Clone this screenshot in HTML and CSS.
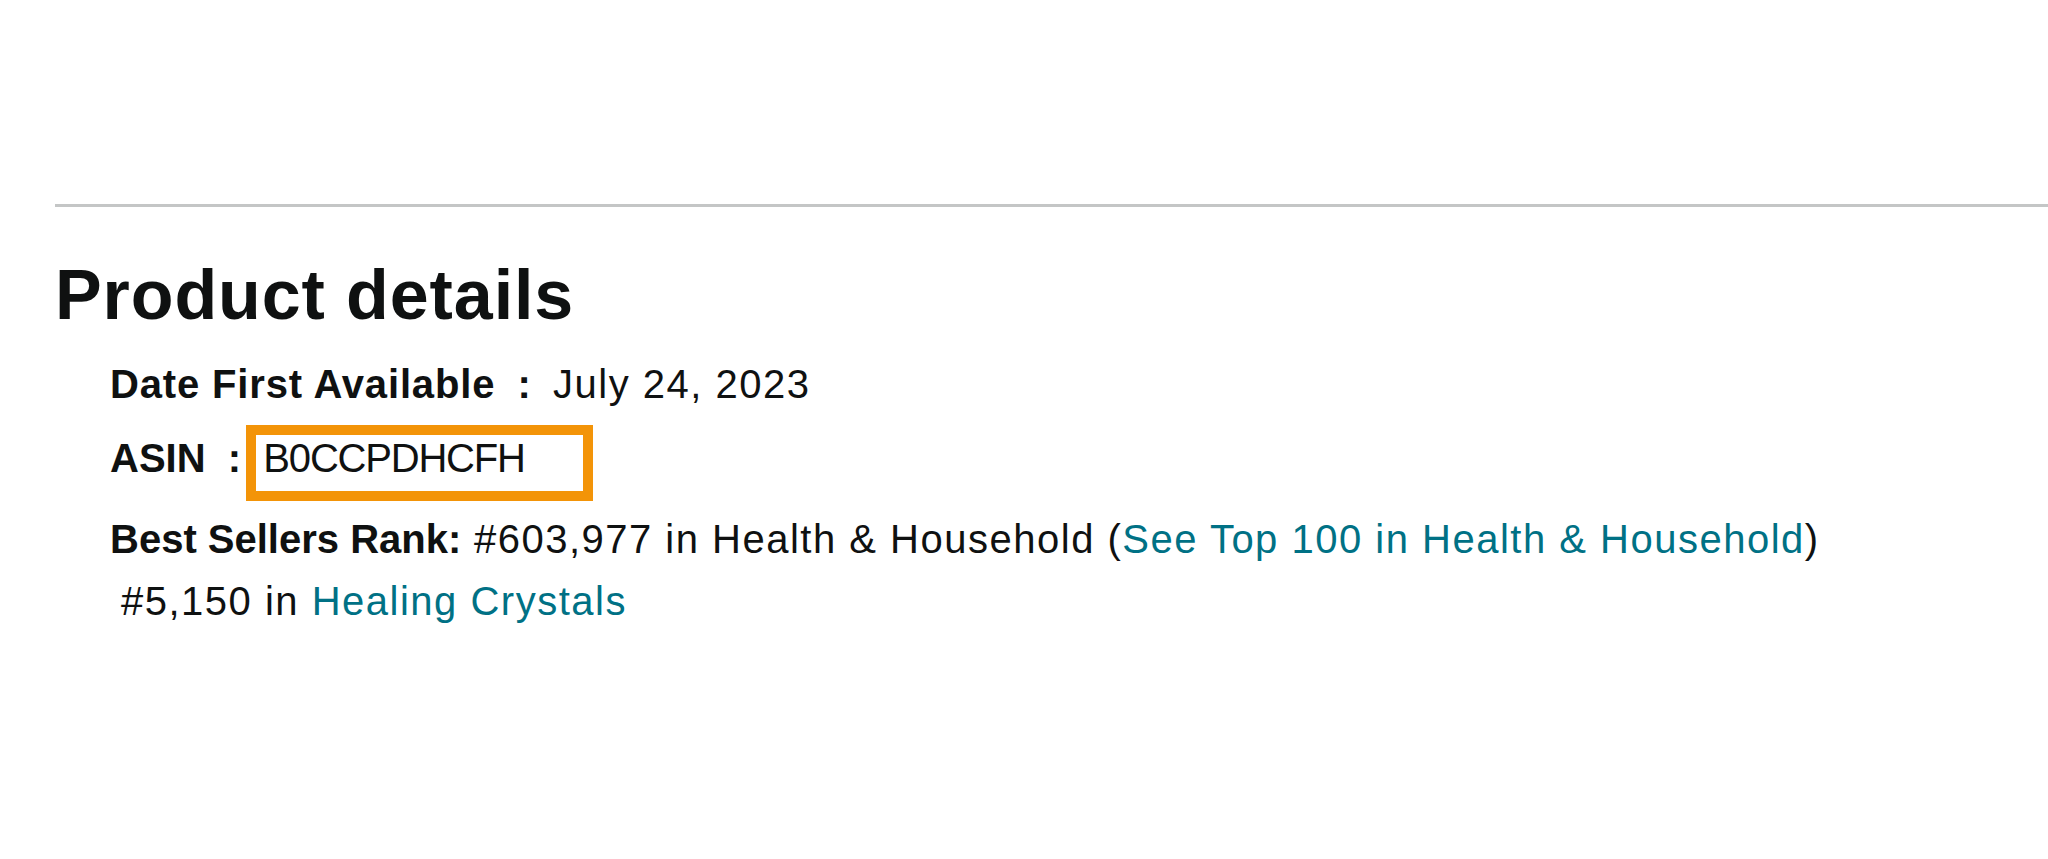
FILE: index.html
```html
<!DOCTYPE html>
<html lang="en">
<head>
<meta charset="utf-8">
<title>Product details</title>
<link rel="stylesheet" href="styles.css">
</head>
<body>
<div class="page">
  <hr class="divider">
  <h2 class="title">Product details</h2>
  <ul class="details">
    <li class="row row-date"><span class="label"><span class="label-wide">Date First Available</span> &rlm; : &lrm; </span><span class="value">July 24, 2023</span></li>
    <li class="row row-asin"><span class="label">ASIN &rlm; : &lrm; </span><span class="value asin">B0CCPDHCFH</span></li>
    <li class="row row-rank"><span class="label">Best Sellers Rank:</span> #603,977 in Health &amp; Household (<a class="link" href="#">See Top 100 in Health &amp; Household</a>)<br><span class="sub">#5,150 in <a class="link" href="#">Healing Crystals</a></span></li>
  </ul>
</div>
</body>
</html>
```

FILE: styles.css
```css
html, body {
  margin: 0;
  padding: 0;
  background: #ffffff;
}

body {
  width: 2048px;
  height: 859px;
  overflow: hidden;
  font-family: "Liberation Sans", Arial, sans-serif;
  color: #0f1111;
}

.page {
  padding-top: 204px;
  padding-left: 55px;
}

.divider {
  margin: 0;
  border: 0;
  height: 3px;
  background: #c4c6c6;
}

.title {
  margin: 48px 0 0 0;
  font-size: 70px;
  line-height: 80px;
  font-weight: 700;
  letter-spacing: 0.9px;
  color: #0f1111;
}

.details {
  list-style: none;
  margin: 18px 0 0 0;
  padding: 0 0 0 55px;
  font-size: 40px;
  line-height: 62px;
}

.row {
  margin: 0;
  letter-spacing: 1.5px;
}

.row-date {
  margin-bottom: 12px;
}

.row-asin {
  margin-bottom: 19px;
}

.label {
  font-weight: 700;
  letter-spacing: 0;
}

.label-wide {
  letter-spacing: 0.85px;
}

.row-date .value {
  letter-spacing: 1.5px;
}

.asin {
  position: relative;
  letter-spacing: -1.2px;
}

.asin::after {
  content: "";
  position: absolute;
  left: -17px;
  top: -11px;
  width: 347px;
  height: 76px;
  box-sizing: border-box;
  border: 10px solid #f39408;
}

.sub {
  padding-left: 11px;
}

.link {
  color: #007185;
  text-decoration: none;
}
```
